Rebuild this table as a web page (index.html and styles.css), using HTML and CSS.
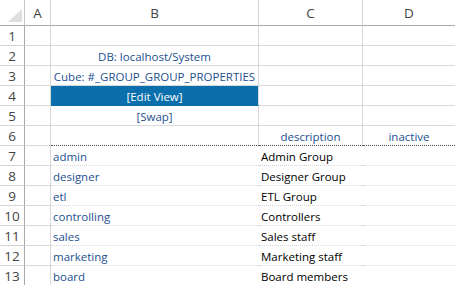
FILE: index.html
```html
<!DOCTYPE html>
<html>
<head>
<meta charset="utf-8">
<link rel="stylesheet" href="styles.css">
</head>
<body>
<div class="sheet">
  <div class="corner"><span class="tri"></span></div>
  <div class="colhead">A</div>
  <div class="colhead">B</div>
  <div class="colhead">C</div>
  <div class="colhead last">D</div>

  <div class="rowhead">1</div><div class="cell"></div><div class="cell"></div><div class="cell"></div><div class="cell last"></div>
  <div class="rowhead">2</div><div class="cell"></div><div class="cell center blue">DB: localhost/System</div><div class="cell"></div><div class="cell last"></div>
  <div class="rowhead">3</div><div class="cell"></div><div class="cell center blue">Cube: #_GROUP_GROUP_PROPERTIES</div><div class="cell"></div><div class="cell last"></div>
  <div class="rowhead">4</div><div class="cell"></div><div class="cell center fill">[Edit View]</div><div class="cell"></div><div class="cell last"></div>
  <div class="rowhead">5</div><div class="cell"></div><div class="cell center blue">[Swap]</div><div class="cell"></div><div class="cell last"></div>
  <div class="rowhead">6</div><div class="cell"></div><div class="cell hdr"></div><div class="cell hdr center blue">description</div><div class="cell hdr center blue last">inactive</div>

  <div class="rowhead">7</div><div class="cell"></div><div class="data blue">admin</div><div class="data">Admin Group</div><div class="data"></div>
  <div class="rowhead">8</div><div class="cell"></div><div class="data blue">designer</div><div class="data">Designer Group</div><div class="data"></div>
  <div class="rowhead">9</div><div class="cell"></div><div class="data blue">etl</div><div class="data">ETL Group</div><div class="data"></div>
  <div class="rowhead">10</div><div class="cell"></div><div class="data blue">controlling</div><div class="data">Controllers</div><div class="data"></div>
  <div class="rowhead">11</div><div class="cell"></div><div class="data blue">sales</div><div class="data">Sales staff</div><div class="data"></div>
  <div class="rowhead">12</div><div class="cell"></div><div class="data blue">marketing</div><div class="data">Marketing staff</div><div class="data"></div>
  <div class="rowhead">13</div><div class="cell"></div><div class="data blue">board</div><div class="data">Board members</div><div class="data"></div>
</div>
</body>
</html>
```
FILE: styles.css
```css
html, body {
  margin: 0;
  padding: 0;
  background: #ffffff;
}
.sheet {
  display: grid;
  grid-template-columns: 25px 26px 208px 104px 92px;
  grid-template-rows: 26px repeat(13, 20px);
  font-family: "Open Sans", "Noto Sans", sans-serif;
  font-size: 11.5px;
  color: #000;
  overflow: hidden;
  width: 455px;
  height: 285px;
}
.sheet > div {
  box-sizing: border-box;
  white-space: nowrap;
  overflow: hidden;
}
.corner {
  border-right: 1px solid #c6c6c6;
  border-bottom: 1px solid #ababab;
  position: relative;
}
.tri {
  position: absolute;
  right: 2px;
  bottom: 3px;
  width: 0;
  height: 0;
  border-left: 14px solid transparent;
  border-bottom: 13px solid #dfdfdf;
}
.colhead {
  border-right: 1px solid #d4d4d4;
  border-bottom: 1px solid #ababab;
  display: flex;
  align-items: center;
  justify-content: center;
  font-size: 13.5px;
  color: #444;
  padding-top: 1px;
}
.colhead.last { border-right: none; }
.rowhead {
  border-right: 1px solid #ababab;
  border-bottom: 1px solid #d4d4d4;
  display: flex;
  align-items: center;
  justify-content: center;
  font-size: 13.5px;
  color: #444;
}
.cell {
  border-right: 1px solid #d9d9d9;
  border-bottom: 1px solid #d9d9d9;
  display: flex;
  align-items: flex-end;
  padding: 0 2px 1px;
}
.cell.last { border-right: none; }
.center { justify-content: center; }
.blue { color: #1d4f8f; }
.fill {
  background: #0a6fac;
  color: #ffffff;
  border-bottom-color: #0a6fac;
}
.hdr {
  border-bottom: 1px dotted #3a4a5a;
}
.data {
  border-bottom: 1px dotted #d6d6d6;
  display: flex;
  align-items: flex-end;
  padding: 0 2px 1px;
}
```
